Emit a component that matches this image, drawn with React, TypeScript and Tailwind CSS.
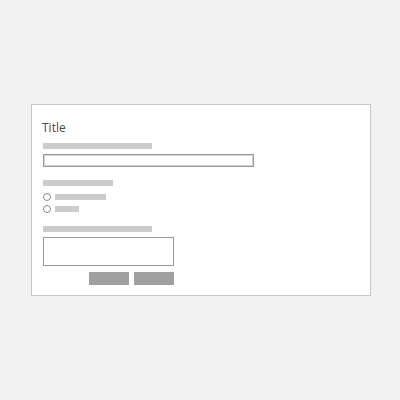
import React from 'react';

function Bar({ w }: { w: string }) {
  return <div className={`h-[6px] bg-[#cccccc] ${w}`} />;
}

export default function App() {
  return (
    <div className="w-[400px] h-[400px] bg-[#f2f2f2] pt-[104px] pl-[31px]" style={{ fontFamily: '"Open Sans", "Liberation Sans", sans-serif' }}>
      <div className="w-[340px] h-[192px] bg-white border border-[#c8c8c8] pl-[11px] pt-[15px] flex flex-col">
        {/* Title */}
        <div className="text-[12px] leading-[16px] text-[#4a4a4a] -ml-[1px]">Title</div>

        {/* Text field */}
        <div className="mt-[7px] w-[109px]"><Bar w="w-[109px]" /></div>
        <div className="mt-[5px] w-[211px] h-[13px] border border-[#999999] shadow-[inset_0_0_0_1px_#d4d4d4]" />

        {/* Radio group */}
        <div className="mt-[13px]"><Bar w="w-[70px]" /></div>
        <div className="mt-[7px] flex flex-col gap-[4px]">
          <div className="flex items-center gap-[4px] h-[8px]">
            <div className="w-[8px] h-[8px] rounded-full border border-[#8a8a8a]" />
            <Bar w="w-[51px]" />
          </div>
          <div className="flex items-center gap-[4px] h-[8px]">
            <div className="w-[8px] h-[8px] rounded-full border border-[#8a8a8a]" />
            <Bar w="w-[24px]" />
          </div>
        </div>

        {/* Textarea */}
        <div className="mt-[13px]"><Bar w="w-[109px]" /></div>
        <div className="w-[131px] flex flex-col">
          <div className="mt-[5px] h-[29px] border border-[#999999]" />
          <div className="mt-[6px] flex justify-end gap-[5px]">
            <div className="w-[40px] h-[13px] bg-[#a0a0a0]" />
            <div className="w-[40px] h-[13px] bg-[#a0a0a0]" />
          </div>
        </div>
      </div>
    </div>
  );
}
